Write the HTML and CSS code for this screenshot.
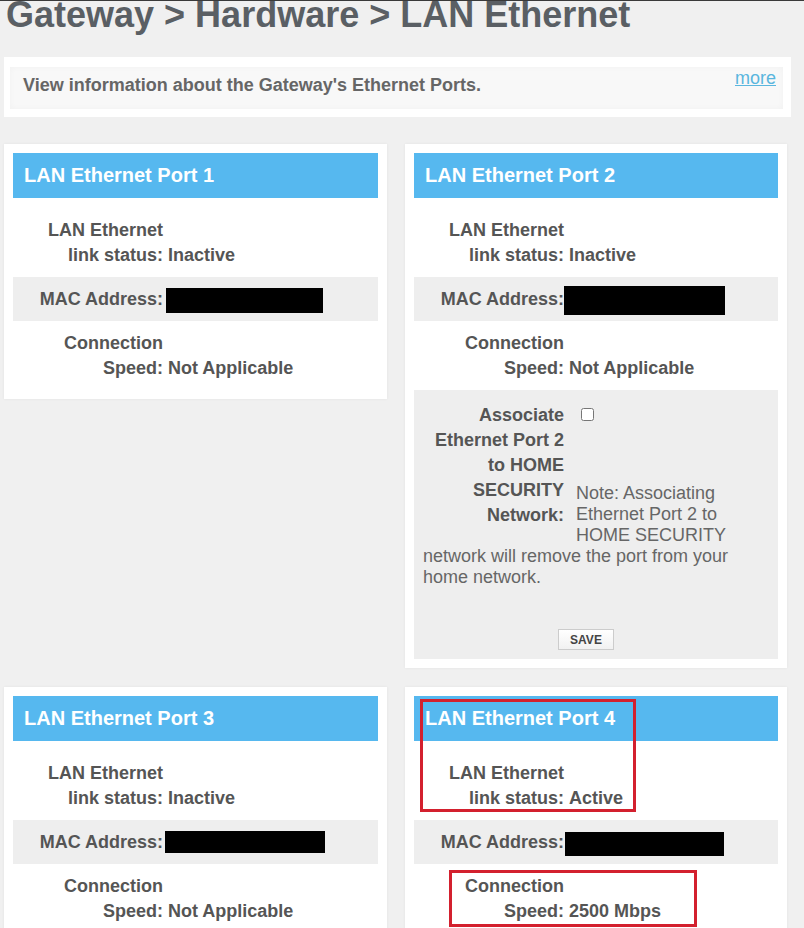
FILE: index.html
```
<!DOCTYPE html>
<html lang="en">
<head>
<meta charset="utf-8">
<title>Gateway &gt; Hardware &gt; LAN Ethernet</title>
<link rel="stylesheet" href="styles.css">
</head>
<body>
<h1 class="page-title">Gateway &gt; Hardware &gt; LAN Ethernet</h1>

<div class="intro">
  <div class="intro-inner">
    <a class="more" href="#">more</a>
    <p class="intro-text">View information about the Gateway's Ethernet Ports.</p>
  </div>
</div>

<div class="ports">
  <section class="card">
    <h2 class="card-head">LAN Ethernet Port 1</h2>
    <div class="row"><span class="label">LAN Ethernet link status:</span><span class="value">Inactive</span></div>
    <div class="row row-alt"><span class="label">MAC Address:</span><span class="redact redact-1"></span></div>
    <div class="row"><span class="label">Connection Speed:</span><span class="value">Not Applicable</span></div>
  </section>

  <section class="card">
    <h2 class="card-head">LAN Ethernet Port 2</h2>
    <div class="row"><span class="label">LAN Ethernet link status:</span><span class="value">Inactive</span></div>
    <div class="row row-alt"><span class="label">MAC Address:</span><span class="redact redact-2"></span></div>
    <div class="row"><span class="label">Connection Speed:</span><span class="value">Not Applicable</span></div>
    <div class="row-assoc">
      <span class="label-float">Associate Ethernet Port 2 to HOME SECURITY Network:</span>
      <input type="checkbox" class="assoc-check">
      <div class="note">Note: Associating Ethernet Port 2 to HOME SECURITY network will remove the port from your home network.</div>
      <div class="save-wrap"><button class="save-btn" type="button">SAVE</button></div>
    </div>
  </section>

  <section class="card">
    <h2 class="card-head">LAN Ethernet Port 3</h2>
    <div class="row"><span class="label">LAN Ethernet link status:</span><span class="value">Inactive</span></div>
    <div class="row row-alt"><span class="label">MAC Address:</span><span class="redact redact-3"></span></div>
    <div class="row"><span class="label">Connection Speed:</span><span class="value">Not Applicable</span></div>
  </section>

  <section class="card card-marked">
    <h2 class="card-head">LAN Ethernet Port 4</h2>
    <div class="row"><span class="label">LAN Ethernet link status:</span><span class="value">Active</span></div>
    <div class="row row-alt"><span class="label">MAC Address:</span><span class="redact redact-4"></span></div>
    <div class="row"><span class="label">Connection Speed:</span><span class="value">2500 Mbps</span></div>
    <div class="mark mark-status"></div>
    <div class="mark mark-speed"></div>
  </section>
</div>
</body>
</html>
```

FILE: styles.css
```
html, body {
  overflow: hidden;
}

body {
  margin: 0;
  border-top: 1px solid #3a3a3a;
  background: #f0f0f0;
  font-family: "Liberation Sans", Arial, sans-serif;
  color: #555555;
  height: 927px;
}

.page-title {
  margin: 0;
  padding-left: 6px;
  font-size: 36px;
  line-height: 27px;
  font-weight: bold;
  color: #5a5f64;
  white-space: nowrap;
}

.intro {
  margin: 29px 0 0 4px;
  width: 787px;
  box-sizing: border-box;
  padding: 10px 8px 8px 6px;
  background: #ffffff;
}

.intro-inner {
  height: 42px;
  box-sizing: border-box;
  padding: 1px 7px 0 13px;
  background: #f8f8f8;
  box-shadow: inset 0 0 6px rgba(0, 0, 0, 0.03);
}

.more {
  float: right;
  font-size: 18px;
  line-height: 21px;
  color: #5ab6de;
  text-decoration: underline;
}

.intro-text {
  margin: 7px 0 0;
  font-size: 18px;
  line-height: 21px;
  font-weight: bold;
  color: #666666;
}

.ports {
  display: grid;
  grid-template-columns: 383px 382px;
  column-gap: 18px;
  row-gap: 19px;
  margin: 27px 0 0 4px;
  align-items: start;
}

.card {
  position: relative;
  background: #ffffff;
  padding: 9px;
  box-shadow: 0 0 3px rgba(0, 0, 0, 0.06);
}

.card-head {
  margin: 0 0 10px;
  height: 45px;
  padding-left: 11px;
  background: #56b8ef;
  color: #ffffff;
  font-size: 20px;
  line-height: 45px;
  font-weight: bold;
}

.row {
  display: flex;
  align-items: flex-end;
  padding: 10px 9px 9px;
  font-size: 18px;
  line-height: 25px;
  font-weight: bold;
}

.row-alt {
  background: #eeeeee;
}

.label {
  flex: 0 0 141px;
  text-align: right;
}

.value {
  margin-left: 5px;
}

.redact {
  align-self: flex-start;
  display: block;
  background: #000000;
}

.redact-1 { margin: 1px 0 -1px 3px; width: 157px; height: 25px; }
.redact-2 { margin: -1px 0 -3px 0; width: 161px; height: 29px; }
.redact-3 { margin: 1px 0 0 2px; width: 160px; height: 22px; }
.redact-4 { margin: 2px 0 -1px 1px; width: 159px; height: 24px; }

.row-assoc {
  background: #eeeeee;
  padding: 13px 9px 9px;
  font-size: 18px;
  line-height: 25px;
}

.label-float {
  float: left;
  width: 141px;
  margin-right: 12px;
  text-align: right;
  font-weight: bold;
}

.assoc-check {
  width: 13px;
  height: 13px;
  margin: 0 0 0 5px;
  vertical-align: baseline;
}

.note {
  margin-top: 55px;
  line-height: 21px;
  color: #666666;
}

.save-wrap {
  margin-top: 41px;
  padding-left: 135px;
  line-height: 0;
}

.save-btn {
  width: 56px;
  height: 21px;
  padding: 0;
  border: 1px solid #cccccc;
  background: linear-gradient(#ffffff, #f1f1f1);
  font-family: "Liberation Sans", Arial, sans-serif;
  font-size: 12px;
  font-weight: bold;
  color: #444444;
}

.mark {
  position: absolute;
  border: 3px solid #d3202e;
  box-sizing: border-box;
}

.mark-status {
  left: 15px;
  top: 12px;
  width: 216px;
  height: 113px;
}

.mark-speed {
  left: 44px;
  top: 183px;
  width: 248px;
  height: 57px;
}
```
